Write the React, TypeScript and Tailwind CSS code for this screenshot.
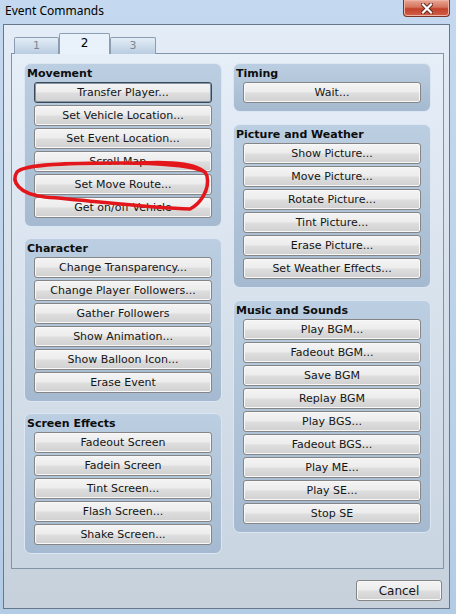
// EventCommands — dialog listing event command buttons, page 2 of 3.

const font = { fontFamily: '"DejaVu Sans", Verdana, sans-serif' };

const movement = [
  'Transfer Player...',
  'Set Vehicle Location...',
  'Set Event Location...',
  'Scroll Map...',
  'Set Move Route...',
  'Get on/off Vehicle',
];
const character = [
  'Change Transparency...',
  'Change Player Followers...',
  'Gather Followers',
  'Show Animation...',
  'Show Balloon Icon...',
  'Erase Event',
];
const screenEffects = ['Fadeout Screen', 'Fadein Screen', 'Tint Screen...', 'Flash Screen...', 'Shake Screen...'];
const timing = ['Wait...'];
const picture = [
  'Show Picture...',
  'Move Picture...',
  'Rotate Picture...',
  'Tint Picture...',
  'Erase Picture...',
  'Set Weather Effects...',
];
const music = [
  'Play BGM...',
  'Fadeout BGM...',
  'Save BGM',
  'Replay BGM',
  'Play BGS...',
  'Fadeout BGS...',
  'Play ME...',
  'Play SE...',
  'Stop SE',
];

function CmdButton({ label, isDefault = false, className = 'w-full' }: { label: string; isDefault?: boolean; className?: string }) {
  return (
    <button
      className={`h-[21px] shrink-0 rounded-[3px] border text-[11px] leading-none text-[#151515] bg-[linear-gradient(to_bottom,#f4f4f4_0%,#ececec_48%,#dedede_52%,#d0d0d0_100%)] ${
        isDefault
          ? 'border-[#3a4856] shadow-[inset_0_0_0_1px_#8796a6]'
          : 'border-[#858585] shadow-[inset_0_0_0_1px_#f8f8f8]'
      } ${className}`}
      style={font}
    >
      {label}
    </button>
  );
}

function Group({ title, items, firstDefault = false }: { title: string; items: string[]; firstDefault?: boolean }) {
  return (
    <div className="flex flex-col rounded-[7px] border border-[#dbe6f2] bg-[linear-gradient(to_bottom,#bccee1,#a5bad0)] pt-[2px] pb-[8px]">
      <div className="h-[16px] px-[2px] text-[11px] font-bold leading-[16px] text-[#0d0d0d]" style={font}>
        {title}
      </div>
      <div className="flex flex-col gap-[2px] px-[9px]">
        {items.map((it, i) => (
          <CmdButton key={it} label={it} isDefault={firstDefault && i === 0} />
        ))}
      </div>
    </div>
  );
}

export default function App() {
  return (
    <div className="relative h-[614px] w-[456px] overflow-hidden bg-[linear-gradient(to_bottom,#c4d9ef,#b3cce6)]">
      {/* Title bar */}
      <div className="flex h-[24px] items-start">
        <span
          className="mt-[3px] pl-[5px] text-[12px] leading-[16px] text-black"
          style={{ fontFamily: '"Noto Sans", "Open Sans", sans-serif' }}
        >
          Event Commands
        </span>
        <div className="ml-auto mr-[6px] flex h-[17px] w-[47px] items-center justify-center rounded-b-[4px] border border-t-0 border-[#7a3326] bg-[linear-gradient(to_bottom,#e7a896_0%,#d6735c_45%,#c2412a_55%,#d2604a_100%)] shadow-[inset_0_0_0_1px_#eeb3a5]">
          <svg width="12" height="11" viewBox="0 0 12 11">
            <path d="M2 1.5 L10 9.5 M10 1.5 L2 9.5" stroke="#5b2219" strokeWidth="4" strokeLinecap="square" />
            <path d="M2 1.5 L10 9.5 M10 1.5 L2 9.5" stroke="#ffffff" strokeWidth="2.2" strokeLinecap="square" />
          </svg>
        </div>
      </div>

      {/* Client area */}
      <div className="ml-[3px] flex h-[585px] w-[447px] flex-col border border-[#67788a] bg-[linear-gradient(to_bottom,#e3ecf7,#c6d1dc)] pt-[8px]">
        {/* Tabs */}
        <div className="relative z-10 flex h-[21px] items-end pl-[10px]">
          <div
            className="flex h-[17px] w-[45px] items-center justify-center rounded-t-[2px] border border-b-0 border-[#8b9db1] bg-[linear-gradient(to_bottom,#e3edf7,#b9cce0)] text-[11px] text-[#7b8794]"
            style={font}
          >
            1
          </div>
          <div
            className="flex h-[21px] w-[51px] items-center justify-center rounded-t-[2px] border border-b-0 border-[#8b9db1] bg-[#e9f1fa] pb-[2px] text-[12px] text-black"
            style={font}
          >
            2
          </div>
          <div
            className="flex h-[17px] w-[46px] items-center justify-center rounded-t-[2px] border border-b-0 border-[#8b9db1] bg-[linear-gradient(to_bottom,#e3edf7,#b9cce0)] text-[11px] text-[#7b8794]"
            style={font}
          >
            3
          </div>
        </div>

        {/* Tab page */}
        <div className="-mt-[1px] ml-[7px] flex h-[516px] w-[433px] gap-[11px] border border-[#8294a8] bg-[linear-gradient(to_bottom,#e6eef8,#c9d5e1)] pl-[12px] pt-[9px]">
          <div className="flex w-[198px] flex-col gap-[11px]">
            <Group title="Movement" items={movement} firstDefault />
            <Group title="Character" items={character} />
            <Group title="Screen Effects" items={screenEffects} />
          </div>
          <div className="flex w-[198px] flex-col gap-[12px]">
            <Group title="Timing" items={timing} />
            <Group title="Picture and Weather" items={picture} />
            <Group title="Music and Sounds" items={music} />
          </div>
        </div>

        <div className="mt-[11px] flex justify-end pr-[7px]">
          <CmdButton label="Cancel" className="w-[86px] text-[12px]" />
        </div>
      </div>

      {/* Hand-drawn red annotation */}
      <svg className="pointer-events-none absolute left-0 top-0" width="456" height="614" viewBox="0 0 456 614">
        <path
          d="M140 163 C172 161 203 164 207 176 C210 190 200 204 190 209 C150 208 95 201 45 197 C18 194 11 181 17 172 C24 164 70 163 120 163 C160 163 195 166 205 172"
          fill="none"
          stroke="#e3171b"
          strokeWidth="3.5"
          strokeLinecap="round"
        />
      </svg>
    </div>
  );
}
